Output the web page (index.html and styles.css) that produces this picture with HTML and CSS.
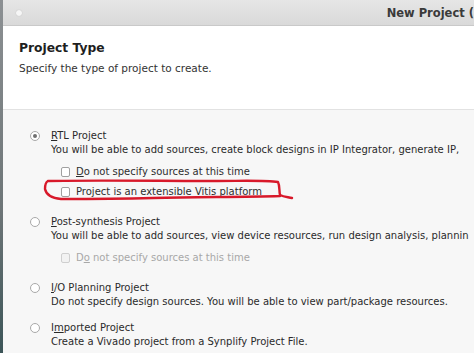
FILE: index.html
```html
<!DOCTYPE html>
<html>
<head>
<meta charset="utf-8">
<link rel="stylesheet" href="styles.css">
</head>
<body>
<div class="screen">
  <div class="edge"></div>
  <div class="window">
    <div class="titlebar">
      <span class="dot"></span>
      <span class="title">New Project (</span>
    </div>
    <div class="header">
      <div class="h-title">Project Type</div>
      <div class="h-sub">Specify the type of project to create.</div>
    </div>
    <div class="body">
      <div class="option">
        <span class="radio checked"></span>
        <div class="opt-text">
          <div class="opt-name"><u>R</u>TL Project</div>
          <div class="opt-desc">You will be able to add sources, create block designs in IP Integrator, generate IP,</div>
          <div class="check"><span class="box"></span><span><u>D</u>o not specify sources at this time</span></div>
          <div class="check second"><span class="box"></span><span>Project is an extensible <u>V</u>itis platform</span></div>
        </div>
      </div>
      <div class="option">
        <span class="radio"></span>
        <div class="opt-text">
          <div class="opt-name"><u>P</u>ost-synthesis Project</div>
          <div class="opt-desc">You will be able to add sources, view device resources, run design analysis, plannin</div>
          <div class="check disabled"><span class="box"></span><span>D<u>o</u> not specify sources at this time</span></div>
        </div>
      </div>
      <div class="option">
        <span class="radio"></span>
        <div class="opt-text">
          <div class="opt-name"><u>I</u>/O Planning Project</div>
          <div class="opt-desc">Do not specify design sources. You will be able to view part/package resources.</div>
        </div>
      </div>
      <div class="option tight">
        <span class="radio"></span>
        <div class="opt-text">
          <div class="opt-name">I<u>m</u>ported Project</div>
          <div class="opt-desc">Create a Vivado project from a Synplify Project File.</div>
        </div>
      </div>
    </div>
    <svg class="mark" width="300" height="30" viewBox="0 0 300 30">
      <path d="M45 4 C90 3 160 4 210 4 C240 4 262 3 275 5 C277 9 276 14 277 18 C281 20 285 20 289 21 M277 19 C240 20 200 20 150 21 C110 22 80 22 58 22 C48 21 43 17 42 12 C42 8 43 5 45 4" fill="none" stroke="#d8192a" stroke-width="2.4" stroke-linecap="round" stroke-linejoin="round"/>
    </svg>
  </div>
</div>
</body>
</html>
```

FILE: styles.css
```css
* { box-sizing: border-box; }
html, body { margin: 0; padding: 0; }
body {
  width: 474px;
  height: 353px;
  overflow: hidden;
  font-family: "DejaVu Sans", "Liberation Sans", sans-serif;
  color: #2e2e2e;
}
.screen {
  display: flex;
  width: 474px;
  height: 353px;
}
.edge {
  width: 3px;
  flex: none;
  background: linear-gradient(#8c9093, #6d7577 60%, #3c5558);
}
.window {
  flex: 1;
  position: relative;
  display: flex;
  flex-direction: column;
  background: #f7f7f7;
  overflow: hidden;
}
.titlebar {
  height: 26px;
  flex: none;
  display: flex;
  align-items: center;
  justify-content: space-between;
  padding: 0 0 0 13px;
  background: linear-gradient(#e6e6e6, #d9d9d9);
  border-bottom: 1px solid #c9c9c9;
}
.dot {
  width: 6px;
  height: 6px;
  border-radius: 50%;
  background: #f6f6f6;
  box-shadow: 0 0 1px #aaa;
}
.title {
  font-weight: bold;
  font-size: 11.5px;
  color: #3a3a3a;
  white-space: nowrap;
}
.header {
  background: #fff;
  height: 84px;
  flex: none;
  padding: 14px 0 0 16px;
  border-bottom: 1px solid #e2e2e2;
}
.h-title {
  font-weight: bold;
  font-size: 12.3px;
  color: #1e1e1e;
  line-height: 16px;
}
.h-sub {
  font-size: 10.5px;
  margin-top: 6px;
  line-height: 13px;
  color: #333;
}
.body {
  padding: 19px 0 0 27px;
  display: flex;
  flex-direction: column;
  gap: 16px;
}
.option {
  display: flex;
  gap: 11px;
  font-size: 10px;
  line-height: 14px;
  white-space: nowrap;
}
.option.tight { margin-top: -4px; }
.radio {
  width: 10px;
  height: 10px;
  flex: none;
  margin-top: 2px;
  border-radius: 50%;
  border: 1px solid #a9a9a9;
  background: #fff;
  display: flex;
  align-items: center;
  justify-content: center;
}
.radio.checked::after {
  content: "";
  width: 4px;
  height: 4px;
  border-radius: 50%;
  background: #707070;
}
.opt-name { color: #2a2a2a; }
.opt-desc { color: #2a2a2a; }
.check {
  display: flex;
  align-items: center;
  gap: 6px;
  margin-left: 10px;
  margin-top: 8px;
}
.check.second { margin-top: 6px; }
.check .box {
  width: 9px;
  height: 10px;
  border: 1px solid #a0a0a0;
  border-radius: 2px;
  background: #fff;
}
.check.disabled { color: #a8a8a8; margin-top: 8px; }
.check.disabled .box { border-color: #cfcfcf; background: #f2f2f2; }
.mark {
  position: absolute;
  left: 0;
  top: 177px;
}
```
